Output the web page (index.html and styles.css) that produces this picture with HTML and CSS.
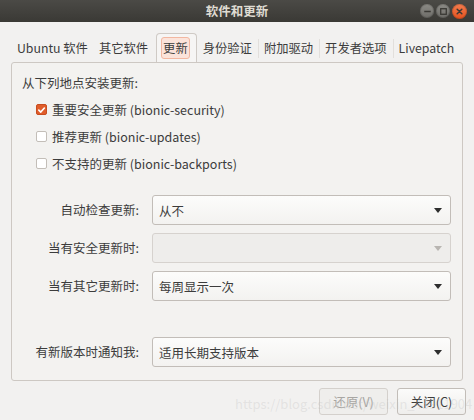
FILE: index.html
```html
<!DOCTYPE html>
<html lang="zh-CN">
<head>
<meta charset="utf-8">
<title>软件和更新</title>
<link rel="stylesheet" href="styles.css">
</head>
<body>
<div class="window">
  <header class="titlebar">
    <div class="spacer"></div>
    <div class="title">软件和更新</div>
    <div class="controls">
      <span class="wbtn">
        <svg width="14" height="14" viewBox="0 0 14 14"><rect x="3.5" y="6.2" width="7" height="1.6" fill="#3a3935"/></svg>
      </span>
      <span class="wbtn">
        <svg width="14" height="14" viewBox="0 0 14 14"><rect x="4" y="4" width="6" height="6" fill="none" stroke="#3a3935" stroke-width="1.4"/></svg>
      </span>
      <span class="wbtn close">
        <svg width="14" height="14" viewBox="0 0 14 14"><path d="M4.5 4.5 L9.5 9.5 M9.5 4.5 L4.5 9.5" stroke="#3a3935" stroke-width="1.6" stroke-linecap="round"/></svg>
      </span>
    </div>
  </header>

  <main class="body">
    <nav class="tabs">
      <div class="tab first">Ubuntu 软件</div>
      <div class="tab">其它软件</div>
      <div class="tab active"><span class="focus">更新</span></div>
      <div class="tab">身份验证</div>
      <div class="tab sep">附加驱动</div>
      <div class="tab sep">开发者选项</div>
      <div class="tab sep">Livepatch</div>
    </nav>

    <section class="panel">
      <div class="heading">从下列地点安装更新:</div>
      <ul class="checks">
        <li><span class="cb checked"><svg width="10" height="10" viewBox="0 0 10 10"><path d="M2 5.2 L4.2 7.3 L8.2 2.8" fill="none" stroke="#fff" stroke-width="1.8" stroke-linecap="round" stroke-linejoin="round"/></svg></span>重要安全更新 (bionic-security)</li>
        <li><span class="cb"></span>推荐更新 (bionic-updates)</li>
        <li><span class="cb"></span>不支持的更新 (bionic-backports)</li>
      </ul>

      <div class="form">
        <label class="lbl">自动检查更新:</label>
        <div class="select"><span>从不</span><i class="arrow"></i></div>
        <label class="lbl">当有安全更新时:</label>
        <div class="select disabled"><span></span><i class="arrow"></i></div>
        <label class="lbl">当有其它更新时:</label>
        <div class="select"><span>每周显示一次</span><i class="arrow"></i></div>
        <label class="lbl last">有新版本时通知我:</label>
        <div class="select last"><span>适用长期支持版本</span><i class="arrow"></i></div>
      </div>
    </section>

    <footer class="actions">
      <button class="btn disabled">还原(V)</button>
      <button class="btn">关闭(C)</button>
      <span class="watermark">https://blog.csdn.net/weixin_43911904</span>
    </footer>
  </main>
</div>
</body>
</html>
```
FILE: styles.css
```css
* { box-sizing: border-box; }
html, body { margin: 0; padding: 0; }
body {
  width: 474px;
  height: 420px;
  overflow: hidden;
  background: #f2f1f0;
  font-family: "Noto Sans CJK SC", "Noto Sans", sans-serif;
  font-size: 12.5px;
  color: #3c3c3c;
}
.window { width: 474px; height: 420px; display: flex; flex-direction: column; }

.titlebar {
  height: 22px;
  flex: none;
  display: grid;
  grid-template-columns: 1fr auto 1fr;
  align-items: center;
  background: linear-gradient(#4b4a46, #3a3935);
  color: #dfdbd2;
}
.title { font-weight: bold; font-size: 12.5px; line-height: 22px; }
.controls { justify-self: end; display: flex; gap: 2px; padding-right: 7px; align-items: center; }
.wbtn {
  width: 14px; height: 14px; border-radius: 50%;
  background: linear-gradient(#8c8b86, #6d6c68);
  display: flex; align-items: center; justify-content: center;
  box-shadow: inset 0 0 0 1px rgba(0,0,0,0.15);
}
.wbtn svg { width: 13px; height: 13px; }
.wbtn.close { background: linear-gradient(#f37d4f, #e4511e); width: 15px; height: 15px; }

.body { flex: 1; display: flex; flex-direction: column; position: relative; }

.tabs {
  display: flex;
  margin: 11px 11px 0;
  height: 29px;
  font-size: 12.3px;
}
.tab {
  padding: 0 6px;
  display: flex; align-items: center;
  line-height: 16px;
  white-space: nowrap;
  position: relative;
}
.tab.first { padding-left: 6px; padding-right: 5px; }
.tab.sep::before {
  content: ""; position: absolute; left: 0; top: 6px; bottom: 4px;
  border-left: 1px solid #e2dfdc;
}
.tab.active {
  border: 1px solid #cfcac5;
  border-bottom: none;
  border-radius: 4px 4px 0 0;
  background: #f6f5f4;
  padding: 0 6px 0 4px;
  margin: 0 0 0 2px;
}
.focus {
  padding: 2px 1px;
  border: 1px solid #f2b7a1;
  border-radius: 3px;
  background: #fbe3da;
}

.panel {
  margin: 0 11px;
  border: 1px solid #cdc8c3;
  border-radius: 3px;
  background: #f3f2f0;
  padding: 11px 11px 13px 10px;
}
.heading { line-height: 18px; }
.checks { list-style: none; margin: 4px 0 0; padding: 0 0 0 14px; }
.checks li { height: 27px; display: flex; align-items: center; }
.cb {
  width: 11px; height: 11px;
  border: 1px solid #c3beb8;
  border-radius: 2px;
  background: #fff;
  margin-right: 5px;
  display: flex; align-items: center; justify-content: center;
}
.cb.checked { background: #e05d2b; border-color: #c84d1f; }

.form {
  margin-top: 18px;
  display: grid;
  grid-template-columns: 117px 299px;
  grid-template-rows: 30px 30px 30px 20px 30px;
  column-gap: 13px;
  row-gap: 8px;
}
.lbl { text-align: right; align-self: center; line-height: 18px; color: #3c3c3c; }
.lbl.last, .select.last { grid-row: 5; }
.select {
  border: 1px solid #c2bdb8;
  border-radius: 3px;
  background: linear-gradient(#fcfcfb, #f3f2f0);
  display: flex; align-items: center; justify-content: space-between;
  padding: 0 8px 0 6px;
}
.select.disabled { background: #eeedeb; border-color: #d6d2ce; }
.arrow {
  width: 0; height: 0;
  border-left: 4px solid transparent;
  border-right: 4px solid transparent;
  border-top: 5px solid #2e2e2e;
}
.select.disabled .arrow { border-top-color: #b8b5b1; }

.actions {
  display: flex; justify-content: flex-end; gap: 9px;
  padding: 7px 8px 0 0;
  position: relative;
}
.btn {
  width: 69px; height: 27px;
  font: inherit; font-size: 12.5px;
  border: 1px solid #c2bdb8;
  border-radius: 3px;
  background: linear-gradient(#fbfbfa, #efeeec);
  color: #3c3c3c;
  padding: 0;
}
.btn.disabled { color: #a8a6a3; border-color: #d4d0cc; background: #efeeec; }
.watermark {
  position: absolute; left: 235px; top: 13px;
  color: rgba(190,190,190,0.3);
  font-size: 13px; white-space: nowrap;
  pointer-events: none;
}
```
